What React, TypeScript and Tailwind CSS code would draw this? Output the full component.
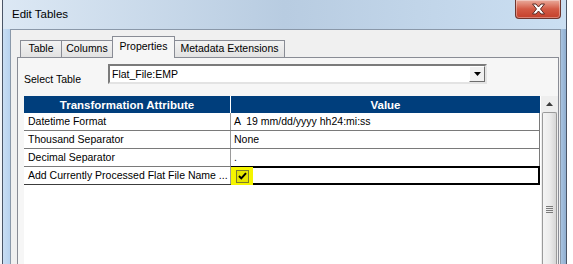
import React from "react";

const rows = [
  { name: "Datetime Format", value: "A  19 mm/dd/yyyy hh24:mi:ss" },
  { name: "Thousand Separator", value: "None" },
  { name: "Decimal Separator", value: "." },
];

function CloseButton() {
  return (
    <div className="mr-[5px] flex h-[19px] w-[46px] items-center justify-center rounded-b-[4px] border border-t-0 border-[#6e352d] bg-gradient-to-b from-[#e9ab9d] via-[#d35a45] to-[#c43f2a] shadow-[inset_0_0_0_1px_rgba(255,255,255,0.35)]">
      <svg width="15" height="12" viewBox="0 0 15 12">
        <path
          d="M1.5 1 H5 L7.5 4 L10 1 H13.5 L9.5 6 L13.5 11 H10 L7.5 8 L5 11 H1.5 L5.5 6 Z"
          fill="#ffffff"
          stroke="#5a2a24"
          strokeWidth="1"
          strokeLinejoin="round"
        />
      </svg>
    </div>
  );
}

function Tab({
  label,
  width,
  selected,
  first,
}: {
  label: string;
  width: string;
  selected?: boolean;
  first?: boolean;
}) {
  if (selected) {
    return (
      <div
        className={`${width} relative z-10 -mb-px -ml-px flex h-[22px] items-center justify-center border border-b-0 border-[#898c95] bg-[#f6f6f6] pb-[2px]`}
      >
        {label}
      </div>
    );
  }
  return (
    <div
      className={`${width} ${first ? "" : "-ml-px"} flex h-[17px] items-center justify-center border border-b-0 border-[#898c95] bg-gradient-to-b from-[#f3f3f3] to-[#e2e2e2]`}
    >
      {label}
    </div>
  );
}

export default function App() {
  return (
    <div className="flex h-[264px] w-[573px] overflow-hidden bg-white font-['Liberation_Sans',Arial,sans-serif] text-[10.5px] text-black">
      <div className="w-[2px] shrink-0 bg-[#f4f6f8]" />

      {/* Window */}
      <div className="flex w-[565px] shrink-0 flex-col border-x border-[#4a5566] bg-gradient-to-r from-[#dce8f4] via-[#b8cce1] to-[#cbdff2]">
        {/* Title bar */}
        <div className="flex h-[29px] shrink-0 items-start justify-between">
          <span className="pl-[9px] pt-[8px] text-[11.5px] leading-[13px]">Edit Tables</span>
          <CloseButton />
        </div>

        <div className="flex min-h-0 flex-1">
          <div className="w-[7px] shrink-0 bg-gradient-to-r from-[#c9def3] to-[#b7d2ee]" />

          {/* Client area */}
          <div className="flex w-[551px] shrink-0 flex-col border-x border-t border-[#8a98a9] bg-[#f0f0f0] pl-[6px] pr-[1px] pt-[7px]">
            {/* Tab strip */}
            <div className="flex h-[20px] shrink-0 items-end pl-[3px]">
              <Tab label="Table" width="w-[42px]" first />
              <Tab label="Columns" width="w-[52px]" />
              <Tab label="Properties" width="w-[63px]" selected />
              <Tab label="Metadata Extensions" width="w-[111px]" />
            </div>

            {/* Tab panel */}
            <div className="flex min-h-0 flex-1 flex-col border-l border-r border-t border-[#898c95] bg-[#f6f6f6] pl-[6px] pt-[6px]">
              {/* Select table row */}
              <div className="flex h-[20px] shrink-0 items-start">
                <span className="w-[84px] pt-[9px] leading-[12px]">Select Table</span>
                <div className="flex h-[20px] w-[379px] items-center border-2 border-b-[#e3e3e3] border-l-[#7b7b7b] border-r-[#e3e3e3] border-t-[#7b7b7b] bg-white">
                  <span className="flex-1 pl-[2px] leading-[12px]">Flat_File:EMP</span>
                  <div className="flex h-[16px] w-[16px] items-center justify-center border border-b-[#6d6d6d] border-l-white border-r-[#6d6d6d] border-t-white bg-[#f0f0f0]">
                    <svg width="7" height="4" viewBox="0 0 7 4">
                      <path d="M0 0 H7 L3.5 4 Z" fill="#000" />
                    </svg>
                  </div>
                </div>
              </div>

              {/* Grid */}
              <div className="mt-[12px] flex min-h-0 flex-1 bg-white">
                <div className="flex w-[516px] shrink-0 flex-col">
                  <div className="flex h-[17px] shrink-0 bg-[#003e7c] text-[11.5px] font-bold leading-[14px] text-white">
                    <div className="flex w-[207px] items-center justify-center border-r border-white">
                      Transformation Attribute
                    </div>
                    <div className="flex flex-1 items-center justify-center">Value</div>
                  </div>

                  {rows.map((r) => (
                    <div key={r.name} className="flex h-[18px] shrink-0 border-b border-r border-[#7a7a7a]">
                      <div className="flex w-[207px] items-center border-r border-[#9a9a9a] pl-[4px]">
                        {r.name}
                      </div>
                      <div className="flex flex-1 items-center whitespace-pre pl-[3px]">{r.value}</div>
                    </div>
                  ))}

                  <div className="flex h-[18px] shrink-0 border-b border-[#3c3c3c]">
                    <div className="flex w-[207px] items-center border-r border-[#9a9a9a] pl-[4px]">
                      Add Currently Processed Flat File Name ...
                    </div>
                    <div className="relative -mt-px h-[19px] flex-1 border-2 border-black">
                      <div className="absolute -left-[2px] -top-px flex h-[18px] w-[22px] items-center justify-center bg-[#f5f500]">
                        <div className="flex h-[13px] w-[13px] items-center justify-center border border-[#7d7d2c] bg-[#e6e600]">
                          <svg width="9" height="8" viewBox="0 0 9 8">
                            <path d="M1 4 L3.3 6.4 L8 1.2" fill="none" stroke="#000" strokeWidth="2" />
                          </svg>
                        </div>
                      </div>
                    </div>
                  </div>
                </div>

                {/* Scrollbar */}
                <div className="ml-px flex w-[17px] shrink-0 flex-col bg-[#eeeeee]">
                  <div className="flex h-[16px] shrink-0 items-center justify-center">
                    <svg width="7" height="4" viewBox="0 0 7 4">
                      <path d="M3.5 0 L7 4 H0 Z" fill="#3d3d3d" />
                    </svg>
                  </div>
                  <div className="mx-px flex flex-1 flex-col items-center rounded-t-[2px] border border-b-0 border-[#9a9a9a] bg-gradient-to-r from-[#f4f4f4] via-[#ececec] to-[#d6d6d6]">
                    <div className="mt-[93px] flex w-[7px] flex-col gap-[1px]">
                      <div className="h-px bg-[#7a7a7a]" />
                      <div className="h-px bg-[#7a7a7a]" />
                      <div className="h-px bg-[#7a7a7a]" />
                      <div className="h-px bg-[#7a7a7a]" />
                    </div>
                  </div>
                </div>
              </div>
            </div>
          </div>

          <div className="w-[5px] shrink-0 bg-gradient-to-r from-[#a9c4e0] to-[#8faed0]" />
        </div>
      </div>

      <div className="flex-1 bg-white" />
    </div>
  );
}
